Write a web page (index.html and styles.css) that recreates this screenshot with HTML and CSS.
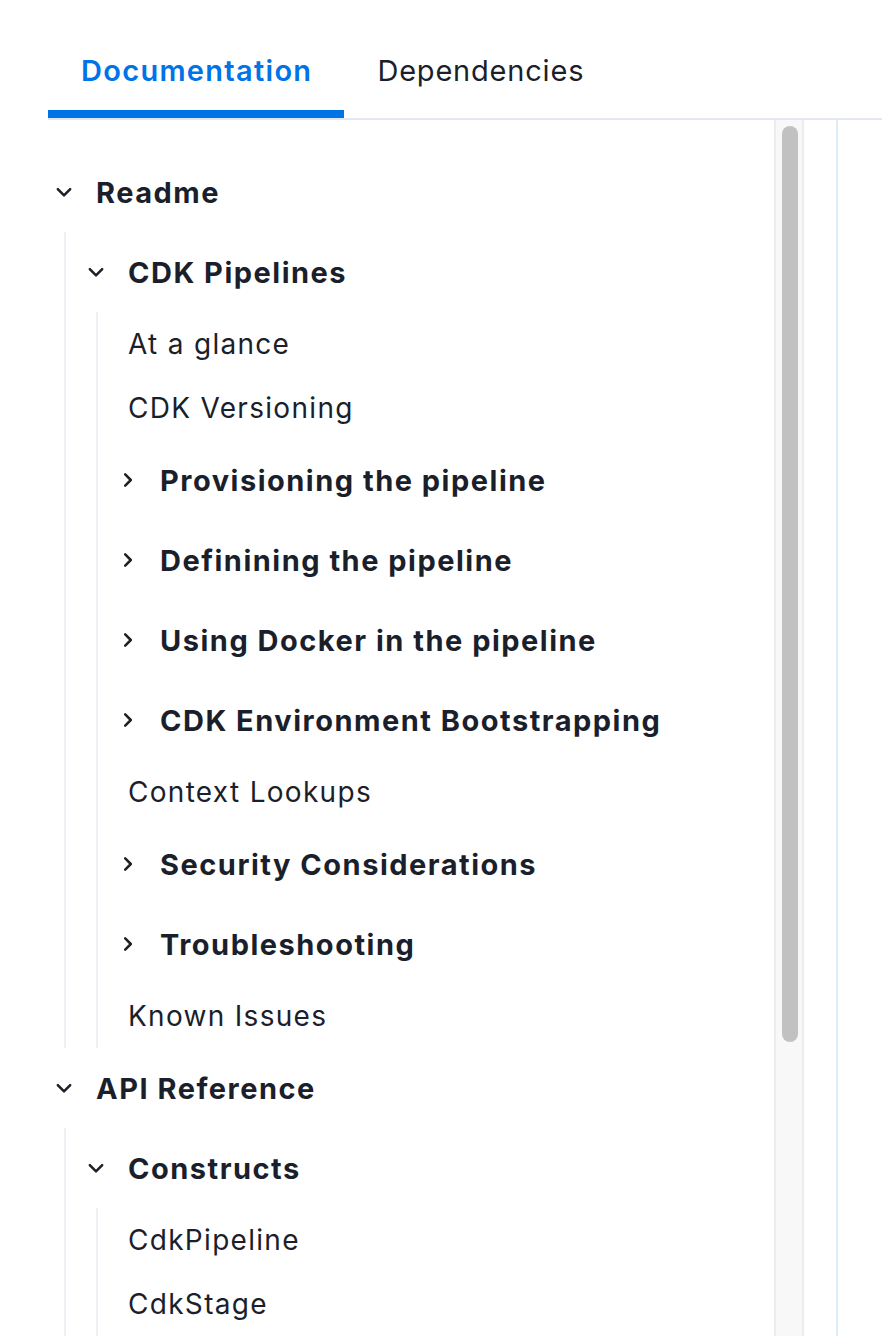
FILE: index.html
```html
<!DOCTYPE html>
<html>

<head>
    <title>Construct Hub - Docs</title>
    <link rel="stylesheet" href="styles.css">
</head>

<body>

<div class="page">

    <div class="tabs">
        <div class="tab active">Documentation</div>
        <div class="tab">Dependencies</div>
    </div> <!-- tabs -->

    <div class="main">

        <nav class="tree">

            <div class="node">
                <div class="row heading">
                    <span class="caret"><svg viewBox="0 0 16 16"><polyline points="2.5,5.5 8,11 13.5,5.5"/></svg></span>
                    <span class="label">Readme</span>
                </div>
                <div class="children">

                    <div class="node">
                        <div class="row heading">
                            <span class="caret"><svg viewBox="0 0 16 16"><polyline points="2.5,5.5 8,11 13.5,5.5"/></svg></span>
                            <span class="label">CDK Pipelines</span>
                        </div>
                        <div class="children">
                            <div class="row leaf">At a glance</div>
                            <div class="row leaf">CDK Versioning</div>
                            <div class="row heading">
                                <span class="caret"><svg viewBox="0 0 16 16"><polyline points="5.5,3 10.5,8 5.5,13"/></svg></span>
                                <span class="label">Provisioning the pipeline</span>
                            </div>
                            <div class="row heading">
                                <span class="caret"><svg viewBox="0 0 16 16"><polyline points="5.5,3 10.5,8 5.5,13"/></svg></span>
                                <span class="label">Definining the pipeline</span>
                            </div>
                            <div class="row heading">
                                <span class="caret"><svg viewBox="0 0 16 16"><polyline points="5.5,3 10.5,8 5.5,13"/></svg></span>
                                <span class="label">Using Docker in the pipeline</span>
                            </div>
                            <div class="row heading">
                                <span class="caret"><svg viewBox="0 0 16 16"><polyline points="5.5,3 10.5,8 5.5,13"/></svg></span>
                                <span class="label">CDK Environment Bootstrapping</span>
                            </div>
                            <div class="row leaf">Context Lookups</div>
                            <div class="row heading">
                                <span class="caret"><svg viewBox="0 0 16 16"><polyline points="5.5,3 10.5,8 5.5,13"/></svg></span>
                                <span class="label">Security Considerations</span>
                            </div>
                            <div class="row heading">
                                <span class="caret"><svg viewBox="0 0 16 16"><polyline points="5.5,3 10.5,8 5.5,13"/></svg></span>
                                <span class="label">Troubleshooting</span>
                            </div>
                            <div class="row leaf">Known Issues</div>
                        </div> <!-- children -->
                    </div> <!-- CDK Pipelines -->

                </div> <!-- children -->
            </div> <!-- Readme -->

            <div class="node">
                <div class="row heading">
                    <span class="caret"><svg viewBox="0 0 16 16"><polyline points="2.5,5.5 8,11 13.5,5.5"/></svg></span>
                    <span class="label">API Reference</span>
                </div>
                <div class="children">
                    <div class="node">
                        <div class="row heading">
                            <span class="caret"><svg viewBox="0 0 16 16"><polyline points="2.5,5.5 8,11 13.5,5.5"/></svg></span>
                            <span class="label">Constructs</span>
                        </div>
                        <div class="children">
                            <div class="row leaf">CdkPipeline</div>
                            <div class="row leaf">CdkStage</div>
                        </div>
                    </div>
                </div>
            </div> <!-- API Reference -->

        </nav> <!-- tree -->

        <div class="scrollbar">
            <div class="thumb"></div>
        </div>

        <div class="gutter"></div>

        <div class="content"></div>

    </div> <!-- main -->

</div> <!-- page -->

</body>

</html>
```

FILE: styles.css
```css
body {
    margin: 0;
    background-color: #ffffff;
    font-family: Inter, "Noto Sans", sans-serif;
    color: #1b1f2b;
    overflow: hidden;
}

.page {
    padding-left: 48px;
    height: 1336px;
    display: flex;
    flex-direction: column;
}

.tabs {
    display: flex;
    border-bottom: 2px solid #e3e7ef;
    flex-shrink: 0;
}

.tab {
    padding: 0 33px;
    height: 110px;
    line-height: 142px;
    font-size: 29px;
    letter-spacing: 0.8px;
    border-bottom: 8px solid transparent;
}

.tab.active {
    color: #0073e6;
    font-weight: 600;
    letter-spacing: 1.3px;
    padding-right: 32px;
    border-bottom-color: #0073e6;
}

.main {
    display: flex;
    flex: 1;
    min-height: 0;
}

.tree {
    width: 726px;
    padding-top: 32px;
    overflow: hidden;
    font-size: 28px;
}

.row {
    display: flex;
    align-items: center;
    white-space: nowrap;
}

.row.heading {
    height: 80px;
    font-size: 29px;
    font-weight: 700;
    letter-spacing: 1.5px;
}

.row.leaf {
    height: 64px;
    padding-left: 16px;
    letter-spacing: 1.3px;
}

.caret {
    width: 32px;
    height: 32px;
    display: flex;
    align-items: center;
    justify-content: center;
    margin-right: 16px;
    flex-shrink: 0;
}

.caret svg {
    width: 18px;
    height: 18px;
    fill: none;
    stroke: #1b1f2b;
    stroke-width: 2.2;
    stroke-linecap: round;
    stroke-linejoin: round;
}

.children {
    margin-left: 16px;
    border-left: 2px solid #edf0f5;
    padding-left: 14px;
}

/* fake scrollbar, same as the browser's */
.scrollbar {
    width: 20px;
    flex-shrink: 0;
    background-color: #f8f8f8;
    border-left: 2px solid #ececec;
    border-right: 2px solid #ececec;
    padding: 6px 0 0 6px;
}

.thumb {
    width: 16px;
    height: 916px;
    border-radius: 8px;
    background-color: #c1c1c1;
}

.gutter {
    width: 32px;
    flex-shrink: 0;
}

.content {
    flex: 1;
    border-left: 2px solid #ddeefb;
}
```
